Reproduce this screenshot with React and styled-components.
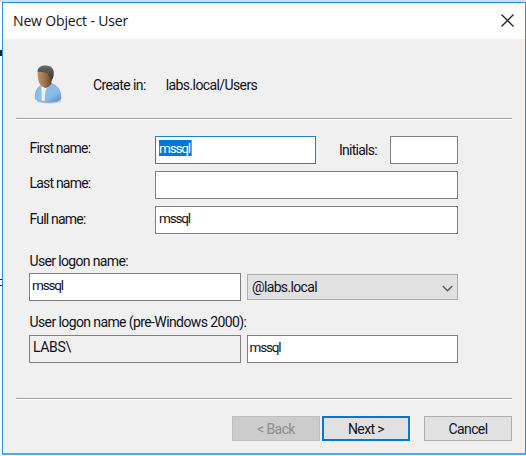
import styled, { createGlobalStyle } from "styled-components"

const GlobalStyle = createGlobalStyle`
    * { box-sizing: border-box; }
    body { margin: 0; background: #fff; }
`

const Desktop = styled.div`
    position: relative;
    width: 526px;
    height: 456px;
    padding: 2px 0 1px 2px;
    background: linear-gradient(#c5e0f8 0, #c5e0f8 2px, #fff 2px);
    overflow: hidden;
    font-family: Roboto, "Liberation Sans", sans-serif;
    font-size: 14px;
    line-height: 16px;
    color: #111118;
    white-space: nowrap;
`

// bits of the window behind that stick out on the left
const Behind = styled.i`
    position: absolute;
    left: 0;
    top: ${({ $top }) => $top}px;
    width: 2px;
    height: ${({ $height }) => $height}px;
    background: ${({ $color }) => $color};
`

const Window = styled.div`
    display: flex;
    flex-direction: column;
    width: 524px;
    height: 453px;
    border: 1px solid #2a8fdf;
    border-bottom: 2px solid #5ba3df;
    background: #f0f0f0;
`

const TitleBar = styled.header`
    display: flex;
    justify-content: space-between;
    height: 36px;
    padding: 9px 11px 0 10px;
    background: #fff;
`

const Text = styled.span`
    display: block;
    letter-spacing: ${({ $track = -0.6 }) => $track}px;
`

const Title = styled(Text)`
    font-family: "Open Sans", "Noto Sans", sans-serif;
    font-size: 14px;
    line-height: 18px;
`

const Head = styled.div`
    display: flex;
    height: 79px;
    padding: 26px 0 0 30px;
`

const Path = styled.div`
    display: flex;
    gap: 20px;
    padding: 12px 0 0 30px;
`

const Rule = styled.hr`
    flex: none;
    width: 496px;
    height: 2px;
    margin: 0 0 0 13px;
    border: 0;
    border-top: 1px solid #a0a0a0;
    background: #fff;
`

const Form = styled.div`
    width: 455px;
    height: 278px;
    padding: 16px 0 0 26px;
`

const Row = styled.div`
    display: grid;
    grid-template-columns: 126px 1fr;
    height: ${({ $height }) => $height}px;
`

const Names = styled.div`
    display: grid;
    grid-template-columns: 161px 74px 68px;
`

const Label = styled(Text)`
    padding-top: ${({ $top = 4 }) => $top}px;
    padding-left: ${({ $left = 0.5 }) => $left}px;
`

const Pair = styled.div`
    display: grid;
    grid-template-columns: 212px 211px;
    column-gap: 6px;
    align-items: center;
    height: 28px;
    margin-top: ${({ $top }) => $top}px;
`

const Field = styled.div`
    height: 28px;
    padding: 3px;
    border: 1px solid ${({ $focus }) => ($focus ? "#1883d7" : "#7f7f7f")};
    background: ${({ $disabled }) => ($disabled ? "#f0f0f0" : "#fff")};
`

const Value = styled(Text)`
    font-size: 13.5px;
    letter-spacing: -1.15px;
    margin-left: ${({ $shift = 0 }) => $shift}px;
`

const Selected = styled(Value)`
    width: 33px;
    height: 16px;
    border-right: 1px solid #e08040;
    background: #0078d7;
    color: #fff;
`

const Select = styled.div`
    display: flex;
    justify-content: space-between;
    height: 26px;
    padding: 4px 4px 0 4px;
    border: 1px solid #adadad;
    background: #e1e1e1;
`

const Footer = styled.footer`
    display: flex;
    justify-content: flex-end;
    padding: 16px 13px 0 0;
`

const Button = styled.button`
    width: 88px;
    height: 25px;
    margin-left: ${({ $gap = 0 }) => $gap}px;
    padding: 0;
    border: ${({ $primary }) => ($primary ? "2px solid #0078d7" : "1px solid #adadad")};
    background: #e1e1e1;
    color: #111118;
    font: inherit;
    letter-spacing: -0.6px;
    &:disabled {
        border-color: #bfbfbf;
        background: #ccc;
        color: #8c8c8c;
    }
`

const UserIcon = () => (
    <svg width="30" height="40" viewBox="0 0 30 40">
        <defs>
            <linearGradient id="shirt" x1="0" y1="0" x2="1" y2="1">
                <stop offset="0" stopColor="#8fc1ed" />
                <stop offset=".65" stopColor="#8bbbe8" />
                <stop offset="1" stopColor="#4f88be" />
            </linearGradient>
            <linearGradient id="skin" x1="0" y1="0" x2="1" y2="0">
                <stop offset="0" stopColor="#c29566" />
                <stop offset=".55" stopColor="#976b43" />
                <stop offset="1" stopColor="#5f3f25" />
            </linearGradient>
            <linearGradient id="hair" x1="0" y1="0" x2="0" y2="1">
                <stop offset="0" stopColor="#6a6a6a" />
                <stop offset="1" stopColor="#333" />
            </linearGradient>
        </defs>
        <ellipse cx="16" cy="36.3" rx="12.5" ry="2.2" fill="#c5c8cb" />
        <path d="M2.3 34C2 28 3 24 7 21L18 18.5C25 20.5 28 25 28 34C24 38.5 8 38 2.3 34Z" fill="url(#shirt)" stroke="#6f9dca" strokeWidth=".6" />
        <path d="M8.5 21L15 21L12.5 26L11.5 36.3L8.6 35.5Z" fill="#eef1f8" />
        <path d="M8.5 15L18.5 13L18.5 18.5C17 21 14 23 11.5 23Z" fill="#7d5534" />
        <path d="M4.6 7C4.6 4 8 2.5 12 2.5C17 2.5 20 6 19.6 11C19.2 17 15.5 22 11.3 22C6.6 22 4.4 15 4.6 7Z" fill="url(#skin)" />
        <path d="M4.6 7C4.4 2.4 8 .5 12.8 .5C18.6 .5 21.2 4 20.8 9C20.6 12 19.8 14 18.2 15.5L17.4 12C16 11 15.2 10 14.8 8C11 7.8 7.8 6.4 4.6 7Z" fill="url(#hair)" />
    </svg>
)

const App = () => {
    return (
        <Desktop>
            <GlobalStyle />
            <Behind $top={50} $height={6} $color="#20204f" />
            <Behind $top={279} $height={1} $color="#222" />
            <Behind $top={285} $height={1} $color="#222" />
            <Window>
                <TitleBar>
                    <Title $track={-0.15}>New Object - User</Title>
                    <svg width="13" height="13" viewBox="0 0 13 13" stroke="#222" strokeWidth="1.3" style={{ marginTop: 2 }}>
                        <path d="M.5 .5L12.5 12.5M12.5 .5L.5 12.5" />
                    </svg>
                </TitleBar>
                <Head>
                    <UserIcon />
                    <Path>
                        <Text>Create in:</Text>
                        <Text>labs.local/Users</Text>
                    </Path>
                </Head>
                <Rule />
                <Form>
                    <Row $height={35}>
                        <Label $track={-0.8}>First name:</Label>
                        <Names>
                            <Field $focus><Selected>mssql</Selected></Field>
                            <Label $top={6} $left={23} $track={-0.75}>Initials:</Label>
                            <Field />
                        </Names>
                    </Row>
                    <Row $height={35}>
                        <Label $track={-0.8}>Last name:</Label>
                        <Field />
                    </Row>
                    <Row $height={28}>
                        <Label $top={5} $track={-0.8}>Full name:</Label>
                        <Field><Value>mssql</Value></Field>
                    </Row>
                    <Label $top={19} $track={-0.65}>User logon name:</Label>
                    <Pair $top={4}>
                        <Field><Value $shift={-1}>mssql</Value></Field>
                        <Select>
                            <Text $track={-0.65}>@labs.local</Text>
                            <svg width="11" height="7" viewBox="0 0 11 7" fill="none" stroke="#555" strokeWidth="1.4" style={{ marginTop: 6 }}>
                                <path d="M.8 1L5.5 5.7L10.2 1" />
                            </svg>
                        </Select>
                    </Pair>
                    <Label $top={13}>User logon name (pre-Windows 2000):</Label>
                    <Pair $top={5}>
                        <Field $disabled><Text $track={-0.35}>LABS\</Text></Field>
                        <Field><Value $shift={-1.5}>mssql</Value></Field>
                    </Pair>
                </Form>
                <Rule />
                <Footer>
                    <Button disabled>&lt; Back</Button>
                    <Button $primary $gap={2}>Next &gt;</Button>
                    <Button $gap={14}>Cancel</Button>
                </Footer>
            </Window>
        </Desktop>
    )
}
export default App
